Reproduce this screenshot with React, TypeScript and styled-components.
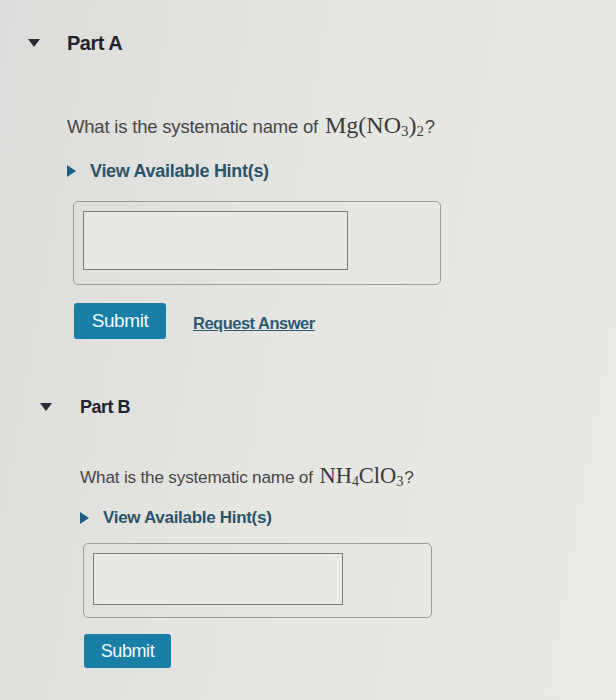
import styled, { createGlobalStyle } from "styled-components";

const GlobalStyle = createGlobalStyle`
    html, body {
        margin: 0;
        padding: 0;
    }
    body {
        background: linear-gradient(100deg, #dcdcda 0%, #e5e5e2 45%, #eaeae7 100%);
        font-family: "Liberation Sans", Arial, sans-serif;
        min-height: 700px;
    }
    * {
        box-sizing: border-box;
    }
`;

type Size = {
    indent: number;
    arrowX: number;
    title: number;
    text: number;
    formula: number;
    hint: number;
    button: number;
    link: number;
    boxW: number;
    boxH: number;
    fieldW: number;
    fieldH: number;
    btnW: number;
    btnH: number;
    gapTop: number;
    gapQ: number;
    gapBox: number;
    gap: number;
};

const partA: Size = {
    indent: 67, arrowX: 28, title: 20, text: 18.5, formula: 24, hint: 18, button: 19, link: 16.5,
    boxW: 368, boxH: 84, fieldW: 265, fieldH: 59, btnW: 92, btnH: 36,
    gapTop: 56, gapQ: 18, gapBox: 18, gap: 18,
};

const partB: Size = {
    indent: 80, arrowX: 40, title: 18, text: 17.2, formula: 22.5, hint: 17, button: 18, link: 16,
    boxW: 349, boxH: 75, fieldW: 250, fieldH: 52, btnW: 87, btnH: 34,
    gapTop: 43, gapQ: 15, gapBox: 13, gap: 16,
};

const Page = styled.main`
    padding-top: 31px;
    display: flex;
    flex-direction: column;
    gap: 56px;
`;

const Section = styled.section<{ $s: Size }>`
    display: flex;
    flex-direction: column;
    padding-left: ${(p) => p.$s.indent}px;
`;

const Header = styled.div`
    display: flex;
    align-items: center;
    height: 24px;
    position: relative;
`;

const DownArrow = styled.span<{ $s: Size }>`
    position: absolute;
    left: ${(p) => p.$s.arrowX - p.$s.indent}px;
    top: 8px;
    width: 0;
    height: 0;
    border-left: 6px solid transparent;
    border-right: 6px solid transparent;
    border-top: 8px solid #2a2935;
`;

const Title = styled.h2<{ $s: Size }>`
    margin: 0;
    font-size: ${(p) => p.$s.title}px;
    font-weight: 600;
    color: #23222e;
    letter-spacing: -0.5px;
`;

const Question = styled.p<{ $s: Size }>`
    margin: ${(p) => p.$s.gapTop}px 0 0;
    font-size: ${(p) => p.$s.text}px;
    line-height: 28px;
    color: #474747;
    letter-spacing: -0.2px;
`;

const Formula = styled.span<{ $s: Size }>`
    font-family: "Liberation Serif", "Times New Roman", serif;
    font-size: ${(p) => p.$s.formula}px;
    color: #3a3a3a;
    letter-spacing: 0;
    margin: 0 1px 0 2px;
    & sub {
        font-size: 0.62em;
        vertical-align: -0.2em;
        line-height: 0;
    }
`;

const Hint = styled.a<{ $s: Size }>`
    margin-top: ${(p) => p.$s.gapQ}px;
    display: flex;
    align-items: center;
    gap: 14px;
    height: 24px;
    font-size: ${(p) => p.$s.hint}px;
    font-weight: 700;
    color: #2b5468;
    letter-spacing: -0.3px;
`;

const RightArrow = styled.span`
    width: 0;
    height: 0;
    border-top: 6px solid transparent;
    border-bottom: 6px solid transparent;
    border-left: 9px solid #1d5f82;
`;

const AnswerBox = styled.div<{ $s: Size }>`
    margin-top: ${(p) => p.$s.gapBox}px;
    margin-left: ${(p) => (p.$s.indent === 67 ? 6 : 3)}px;
    width: ${(p) => p.$s.boxW}px;
    height: ${(p) => p.$s.boxH}px;
    border: 1.5px solid #9c9c9a;
    border-radius: 5px;
    padding: 9px;
`;

const Field = styled.div<{ $s: Size }>`
    width: ${(p) => p.$s.fieldW}px;
    height: ${(p) => p.$s.fieldH}px;
    border: 1.5px solid #7c7c7c;
    background: #e8e8e5;
`;

const Actions = styled.div<{ $s: Size }>`
    margin-top: ${(p) => p.$s.gap}px;
    margin-left: ${(p) => (p.$s.indent === 67 ? 7 : 4)}px;
    display: flex;
    align-items: center;
    gap: 27px;
`;

const SubmitButton = styled.button<{ $s: Size }>`
    width: ${(p) => p.$s.btnW}px;
    height: ${(p) => p.$s.btnH}px;
    border: none;
    border-radius: 3px;
    background: #1a7fa7;
    color: #f4f8fa;
    font-family: "Liberation Sans", Arial, sans-serif;
    font-size: ${(p) => p.$s.button}px;
    letter-spacing: -0.4px;
    padding: 0;
`;

const RequestLink = styled.a<{ $s: Size }>`
    font-size: ${(p) => p.$s.link}px;
    font-weight: 700;
    color: #2d5b76;
    text-decoration: underline;
    letter-spacing: -0.5px;
    margin-top: 4px;
`;

function Part({ s, name, formula, showRequest }: { s: Size; name: string; formula: React.ReactNode; showRequest: boolean }) {
    return (
        <Section $s={s}>
            <Header>
                <DownArrow $s={s} />
                <Title $s={s}>{name}</Title>
            </Header>
            <Question $s={s}>
                What is the systematic name of <Formula $s={s}>{formula}</Formula>?
            </Question>
            <Hint $s={s}>
                <RightArrow />
                View Available Hint(s)
            </Hint>
            <AnswerBox $s={s}>
                <Field $s={s} />
            </AnswerBox>
            <Actions $s={s}>
                <SubmitButton $s={s}>Submit</SubmitButton>
                {showRequest && <RequestLink $s={s}>Request Answer</RequestLink>}
            </Actions>
        </Section>
    );
}

export default function App() {
    return (
        <>
            <GlobalStyle />
            <Page>
                <Part s={partA} name="Part A" showRequest formula={<>Mg(NO<sub>3</sub>)<sub>2</sub></>} />
                <Part s={partB} name="Part B" showRequest={false} formula={<>NH<sub>4</sub>ClO<sub>3</sub></>} />
            </Page>
        </>
    );
}
